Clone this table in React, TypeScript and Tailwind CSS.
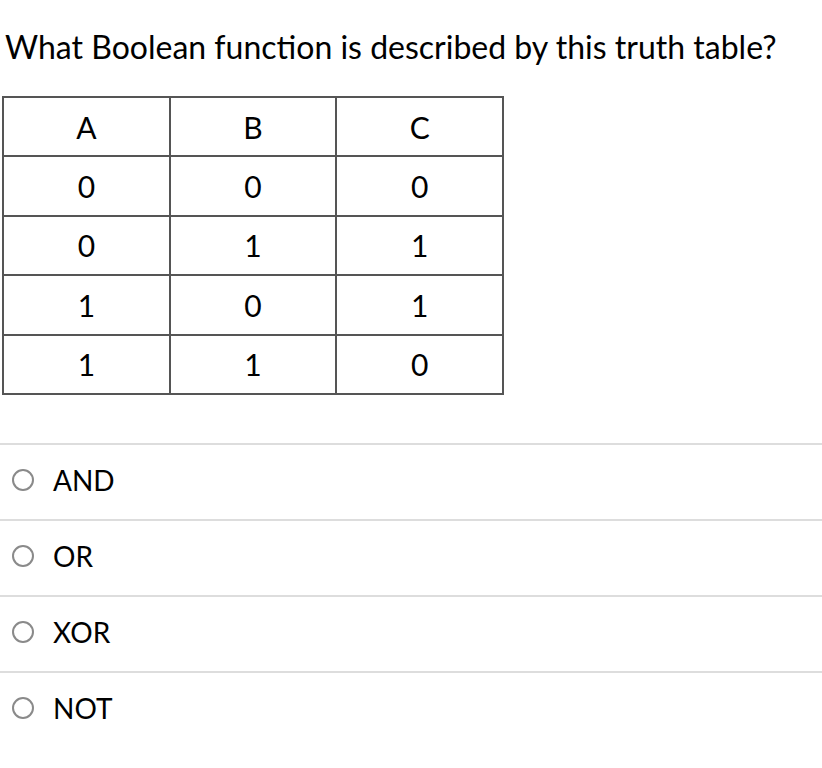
const rows = [
  ['0', '0', '0'],
  ['0', '1', '1'],
  ['1', '0', '1'],
  ['1', '1', '0'],
];

const options = ['AND', 'OR', 'XOR', 'NOT'];

export default function App() {
  return (
    <div className="w-[822px] h-[768px] bg-white text-black font-['Lato',sans-serif] overflow-hidden">
      <h1 className="pl-[5px] pt-[28px] text-[32px] leading-[38px] font-normal">
        What Boolean function is described by this truth table?
      </h1>

      {/* truth table */}
      <table className="mt-[30px] ml-[2px] w-[502px] border-collapse border-2 border-[#666] text-[30px]">
        <thead>
          <tr className="h-[59px]">
            {['A', 'B', 'C'].map((h) => (
              <th key={h} className="border-2 border-[#555] font-normal text-center w-1/3 leading-none">{h}</th>
            ))}
          </tr>
        </thead>
        <tbody>
          {rows.map((r, i) => (
            <tr key={i} className="h-[59.5px]">
              {r.map((v, j) => (
                <td key={j} className="border-2 border-[#555] text-center leading-none">{v}</td>
              ))}
            </tr>
          ))}
        </tbody>
      </table>

      {/* answer options */}
      <div className="mt-[48px]">
        {options.map((o) => (
          <label key={o} className="flex items-center h-[76px] border-t-2 border-[#ddd] pl-[12px] gap-[19px] text-[28px] pb-[4px]">
            <span className="w-[22px] h-[22px] rounded-full border-2 border-[#8a8a8a] shrink-0" />
            <span className="leading-none">{o}</span>
          </label>
        ))}
      </div>
    </div>
  );
}
